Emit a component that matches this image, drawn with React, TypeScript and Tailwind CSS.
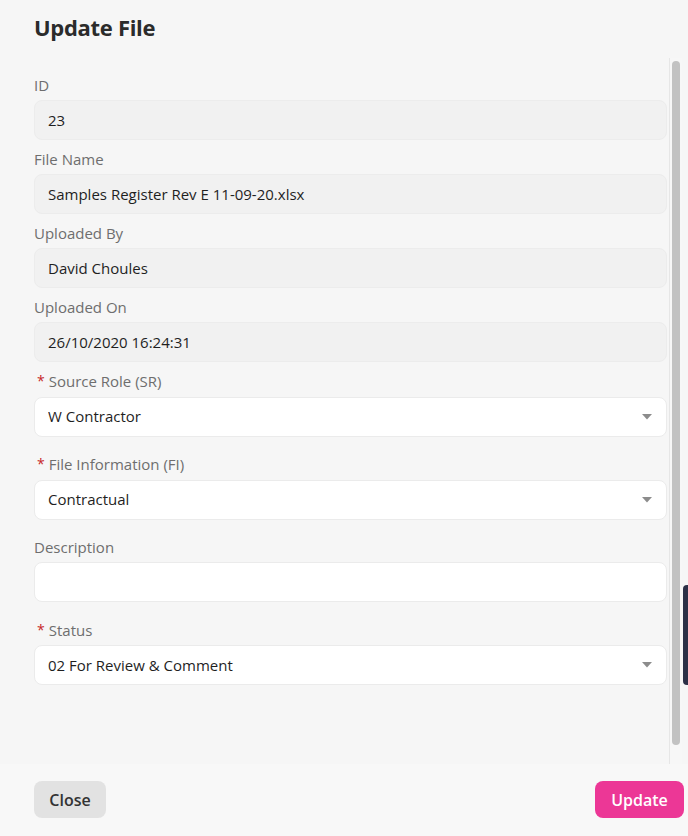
import React from "react";

const Caret = () => (
  <svg width="10" height="6" viewBox="0 0 10 6" className="shrink-0">
    <path d="M0 0 L10 0 L5 5.5 Z" fill="#8c8c8c" />
  </svg>
);

function Field({
  label,
  value,
  required,
  select,
  readOnly,
  wide,
}: {
  label: string;
  value?: string;
  required?: boolean;
  select?: boolean;
  readOnly?: boolean;
  wide?: boolean;
}) {
  return (
    <div className={wide ? "mb-[17.5px]" : "mb-[9px]"}>
      <div
        className={
          "h-[20px] flex items-center text-[15px] text-[#6e6e6e] leading-[20px] " +
          (required ? "mb-[5.5px]" : "mb-[5px]")
        }
      >
        {required && <span className="text-[#c62828] mr-[4px] ml-[3px] text-[14px]">*</span>}
        <span>{label}</span>
      </div>
      <div
        className={
          "h-[40px] rounded-[8px] border flex items-center pl-[13px] pr-[14px] text-[15px] font-medium text-[#1f1f1f] " +
          (readOnly ? "bg-[#f1f1f1] border-[#ececec]" : "bg-white border-[#ebebeb]")
        }
      >
        <span className="flex-1 truncate">{value}</span>
        {select && <Caret />}
      </div>
    </div>
  );
}

export default function App() {
  return (
    <div
      className="w-[688px] h-[836px] relative overflow-hidden bg-[#f6f6f6] flex flex-col"
      style={{ fontFamily: '"Open Sans", "Noto Sans", sans-serif' }}
    >
      <div className="h-[58px] shrink-0 pl-[34px] pt-[9px]">
        <h1 className="text-[22px] font-bold text-[#2b2b2b] leading-[36px] tracking-[-0.3px]">Update File</h1>
      </div>
      <div className="flex flex-1 min-h-0">
        <div className="flex-1 pl-[34px] pr-[2px] pt-[17px]">
          <Field label="ID" value="23" readOnly />
          <Field label="File Name" value="Samples Register Rev E 11-09-20.xlsx" readOnly />
          <Field label="Uploaded By" value="David Choules" readOnly />
          <Field label="Uploaded On" value="26/10/2020 16:24:31" readOnly />
          <Field label="Source Role (SR)" value="W Contractor" required select wide />
          <Field label="File Information (FI)" value="Contractual" required select wide />
          <Field label="Description" value="" wide />
          <Field label="Status" value="02 For Review & Comment" required select wide />
        </div>
        <div className="w-[13px] mr-[6px] border-l border-[#e6e6e6] bg-[#f7f7f7] pt-[3px] pb-[19px] flex justify-center">
          <div className="w-[8px] h-full rounded-full bg-[#c2c2c2]" />
        </div>
      </div>
      <div className="h-[72px] shrink-0 bg-[#f8f8f8] flex items-start justify-between pl-[34px] pr-[4px] pt-[17px]">
        <button className="h-[37px] w-[72px] rounded-[8px] bg-[#e2e2e2] text-[16px] font-semibold text-[#333333]">
          Close
        </button>
        <button className="h-[37px] w-[89px] rounded-[8px] bg-[#ec3796] text-[16px] font-semibold text-white">
          Update
        </button>
      </div>
      <div className="absolute right-0 top-[585px] w-[5px] h-[100px] rounded-l-[4px] bg-[#2b3047]" />
    </div>
  );
}
